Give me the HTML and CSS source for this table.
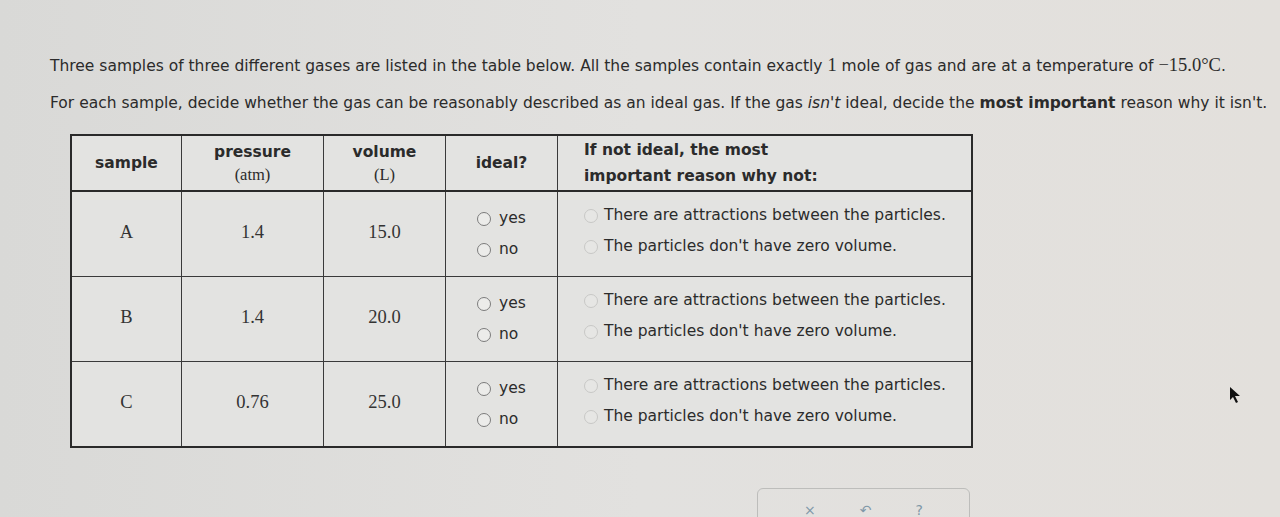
FILE: index.html
```html
<!DOCTYPE html>
<html>
<head>
<meta charset="utf-8">
<link rel="stylesheet" href="styles.css">
</head>
<body>
<div class="page">
  <p class="line line1">Three samples of three different gases are listed in the table below. All the samples contain exactly <span class="num">1</span> mole of gas and are at a temperature of <span class="num">&minus;15.0&deg;C</span>.</p>
  <p class="line line2">For each sample, decide whether the gas can be reasonably described as an ideal gas. If the gas <i>isn't</i> ideal, decide the <b>most important</b> reason why it isn't.</p>

  <table class="gas">
    <thead>
      <tr>
        <th class="c1">sample</th>
        <th class="c2">pressure<span class="unit">(atm)</span></th>
        <th class="c3">volume<span class="unit">(L)</span></th>
        <th class="c4">ideal?</th>
        <th class="c5">If not ideal, the most<br>important reason why not:</th>
      </tr>
    </thead>
    <tbody>
      <tr>
        <td class="serif">A</td>
        <td class="serif">1.4</td>
        <td class="serif">15.0</td>
        <td><div class="opts"><label><span class="radio"></span>yes</label><label><span class="radio"></span>no</label></div></td>
        <td><div class="reasons"><label><span class="radio dim"></span>There are attractions between the particles.</label><label><span class="radio dim"></span>The particles don't have zero volume.</label></div></td>
      </tr>
      <tr>
        <td class="serif">B</td>
        <td class="serif">1.4</td>
        <td class="serif">20.0</td>
        <td><div class="opts"><label><span class="radio"></span>yes</label><label><span class="radio"></span>no</label></div></td>
        <td><div class="reasons"><label><span class="radio dim"></span>There are attractions between the particles.</label><label><span class="radio dim"></span>The particles don't have zero volume.</label></div></td>
      </tr>
      <tr>
        <td class="serif">C</td>
        <td class="serif">0.76</td>
        <td class="serif">25.0</td>
        <td><div class="opts"><label><span class="radio"></span>yes</label><label><span class="radio"></span>no</label></div></td>
        <td><div class="reasons"><label><span class="radio dim"></span>There are attractions between the particles.</label><label><span class="radio dim"></span>The particles don't have zero volume.</label></div></td>
      </tr>
    </tbody>
  </table>

  <div class="toolbar">
    <span class="tool">&times;</span>
    <span class="tool">&#8630;</span>
    <span class="tool">?</span>
  </div>
</div>
<div class="cursor">
  <svg width="14" height="18" viewBox="0 0 14 18"><path d="M2 1 L2 14 L5 11 L8 17 L10 16 L7 10 L12 10 Z" fill="#111"/></svg>
</div>
</body>
</html>
```

FILE: styles.css
```css
html, body {
  margin: 0;
  padding: 0;
}
body {
  width: 1280px;
  height: 517px;
  overflow: hidden;
  background: linear-gradient(90deg, #d9d9d7 0%, #e2e1df 50%, #e3e0dc 100%);
  font-family: "DejaVu Sans", Verdana, sans-serif;
  color: #2b2b2b;
  position: relative;
}
.page {
  padding: 55px 0 0 50px;
}
.line {
  margin: 0;
  font-size: 15.5px;
  line-height: 21px;
  white-space: nowrap;
}
.line1 {
  margin-bottom: 16px;
}
.num {
  font-family: "Liberation Serif", "Times New Roman", serif;
  font-size: 18.5px;
}
table.gas {
  margin: 20px 0 0 20px;
  border-collapse: collapse;
  background: #e3e3e1;
  border: 2px solid #2a2a2a;
  width: 903px;
  table-layout: fixed;
}
.gas th, .gas td {
  border: 1.5px solid #3a3a3a;
  text-align: center;
  vertical-align: middle;
  padding: 0;
}
.gas th {
  height: 54px;
  font-size: 15.5px;
  font-weight: bold;
  border-bottom: 2px solid #2a2a2a;
}
.gas td {
  height: 84px;
}
.c1 { width: 109px; }
.c2 { width: 141px; }
.c3 { width: 121px; }
.c4 { width: 111px; }
.gas th.c5 {
  text-align: left;
  padding-left: 26px;
  line-height: 26px;
}
.unit {
  display: block;
  font-family: "Liberation Serif", "Times New Roman", serif;
  font-weight: normal;
  font-size: 16.5px;
  line-height: 23px;
}
.gas th.c2, .gas th.c3 {
  line-height: 22px;
}
.serif {
  font-family: "Liberation Serif", "Times New Roman", serif;
  font-size: 18.5px;
  color: #333;
}
.gas td.serif {
  vertical-align: top;
  padding-top: 30px;
  height: 54px;
}
.opts {
  display: flex;
  flex-direction: column;
  gap: 12px;
  align-items: flex-start;
  padding-left: 31px;
}
.opts label, .reasons label {
  display: flex;
  align-items: center;
  font-size: 15.5px;
  line-height: 19px;
}
.opts .radio {
  margin-right: 8px;
}
.reasons {
  display: flex;
  flex-direction: column;
  gap: 12px;
  align-items: flex-start;
  padding-left: 26px;
  padding-bottom: 6px;
}
.reasons .radio {
  margin-right: 6px;
}
.radio {
  width: 14px;
  height: 14px;
  border-radius: 50%;
  border: 1.5px solid #7c7c7c;
  background: #ececea;
  box-sizing: border-box;
  display: inline-block;
  flex: none;
}
.radio.dim {
  border-color: #c8c8c6;
  background: #e6e6e4;
}
.toolbar {
  margin: 40px 0 0 707px;
  width: 213px;
  height: 40px;
  border: 1.5px solid #bdbdbb;
  border-radius: 6px;
  display: flex;
  justify-content: space-around;
  align-items: flex-start;
  padding: 14px 24px 0;
  box-sizing: border-box;
}
.tool {
  color: #7f98a8;
  font-size: 14px;
  line-height: 14px;
}
.cursor {
  position: absolute;
  left: 1228px;
  top: 386px;
}
```
